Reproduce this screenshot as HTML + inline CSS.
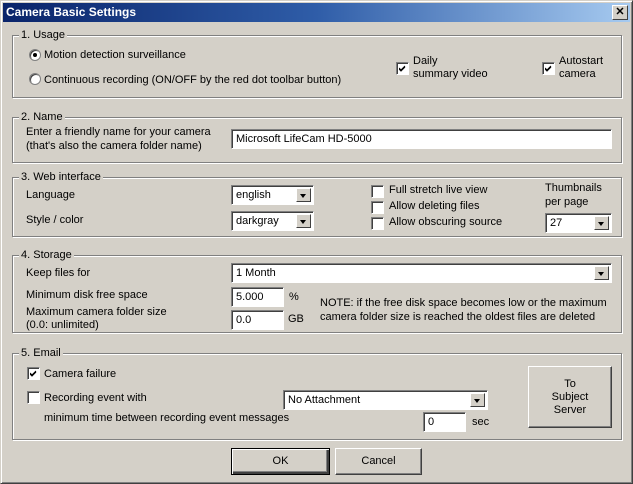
<!DOCTYPE html>
<html><head><style>
body{margin:0;width:633px;height:484px;background:#d4d0c8;font-family:"Liberation Sans",sans-serif;font-size:11px;color:#000;position:relative;overflow:hidden}
.a{position:absolute;white-space:nowrap}
.win{position:absolute;left:0;top:0;width:631px;height:482px;border:1px solid;border-color:#d4d0c8 #404040 #404040 #d4d0c8;box-shadow:inset 1px 1px #fff,inset -1px -1px #808080}
.title{position:absolute;left:3px;top:3px;width:627px;height:19px;background:linear-gradient(90deg,#0a246a,#2f5da8 50%,#a6caf0);color:#fff;font-weight:bold;font-size:12px;line-height:19px;text-indent:3px}
.close{position:absolute;left:612px;top:5px;width:14px;height:13px;background:#d4d0c8;border:1px solid;border-color:#fff #404040 #404040 #fff;font-weight:bold;font-size:11px;line-height:12px;text-align:center;color:#000}
.grp{position:absolute;border:1px solid #808080;box-shadow:1px 1px #fff,inset 1px 1px #fff}
.lg{position:absolute;background:#d4d0c8;padding:0 2px;top:-8px;left:6px;line-height:14px}
.in{position:absolute;background:#fff;border:1px solid;border-color:#808080 #fff #fff #808080;box-shadow:inset 1px 1px #404040;box-sizing:border-box;padding-left:4px;line-height:19px}
.dd{position:absolute;right:2px;top:2px;width:15px;height:14px;background:#d4d0c8;box-sizing:border-box;border:1px solid;border-color:#fff #404040 #404040 #fff}
.dd:after{content:"";position:absolute;left:3px;top:5px;border:3.5px solid transparent;border-top:4px solid #000;border-bottom:0}
.cb{position:absolute;width:13px;height:13px;background:#fff;box-sizing:border-box;border:1px solid;border-color:#808080 #fff #fff #808080;box-shadow:inset 1px 1px #404040}
.cb svg{position:absolute;left:2px;top:2px}
.rb{position:absolute;width:12px;height:12px;border-radius:50%;background:#fff;box-sizing:border-box;border:1px solid #808080;box-shadow:inset 1px 1px #404040}
.btn{position:absolute;background:#d4d0c8;box-sizing:border-box;border:1px solid;border-color:#fff #404040 #404040 #fff;box-shadow:inset -1px -1px #808080;text-align:center}
</style></head><body>
<div class="win"></div>
<div class="title">Camera Basic Settings</div>
<div class="close">✕</div>

<div class="grp" style="left:12px;top:35px;width:608px;height:61px"><span class="lg">1. Usage</span></div>
<div class="rb" style="left:29px;top:49px"><div style="position:absolute;left:3px;top:3px;width:4px;height:4px;border-radius:50%;background:#000"></div></div>
<div class="a" style="left:44px;top:49px">Motion detection surveillance</div>
<div class="rb" style="left:29px;top:73px"></div>
<div class="a" style="left:44px;top:74px">Continuous recording (ON/OFF by the red dot toolbar button)</div>
<div class="cb" style="left:396px;top:62px"><svg width="7" height="7"><path d="M0 3 L2 5 L6 1 M0 4 L2 6 L6 2" stroke="#000" fill="none"/></svg></div>
<div class="a" style="left:413px;top:55px;line-height:13px">Daily<br>summary video</div>
<div class="cb" style="left:542px;top:62px"><svg width="7" height="7"><path d="M0 3 L2 5 L6 1 M0 4 L2 6 L6 2" stroke="#000" fill="none"/></svg></div>
<div class="a" style="left:559px;top:55px;line-height:13px">Autostart<br>camera</div>

<div class="grp" style="left:12px;top:117px;width:608px;height:44px"><span class="lg">2. Name</span></div>
<div class="a" style="left:26px;top:125px;line-height:14px">Enter a friendly name for your camera<br>(that's also the camera folder name)</div>
<div class="in" style="left:231px;top:129px;width:381px;height:20px">Microsoft LifeCam HD-5000</div>

<div class="grp" style="left:12px;top:177px;width:608px;height:58px"><span class="lg">3. Web interface</span></div>
<div class="a" style="left:26px;top:189px">Language</div>
<div class="a" style="left:26px;top:214px">Style / color</div>
<div class="in" style="left:231px;top:185px;width:83px;height:20px">english<div class="dd"></div></div>
<div class="in" style="left:231px;top:211px;width:83px;height:20px">darkgray<div class="dd"></div></div>
<div class="cb" style="left:371px;top:185px"></div><div class="a" style="left:389px;top:184px">Full stretch live view</div>
<div class="cb" style="left:371px;top:201px"></div><div class="a" style="left:389px;top:200px">Allow deleting files</div>
<div class="cb" style="left:371px;top:217px"></div><div class="a" style="left:389px;top:216px">Allow obscuring source</div>
<div class="a" style="left:545px;top:181px;line-height:14px">Thumbnails<br>per page</div>
<div class="in" style="left:545px;top:213px;width:67px;height:20px">27<div class="dd"></div></div>

<div class="grp" style="left:12px;top:255px;width:608px;height:76px"><span class="lg">4. Storage</span></div>
<div class="a" style="left:26px;top:267px">Keep files for</div>
<div class="in" style="left:231px;top:263px;width:381px;height:20px">1 Month<div class="dd"></div></div>
<div class="a" style="left:26px;top:289px">Minimum disk free space</div>
<div class="in" style="left:231px;top:287px;width:53px;height:20px">5.000</div>
<div class="a" style="left:289px;top:291px">%</div>
<div class="a" style="left:26px;top:306px;line-height:13px">Maximum camera folder size<br>(0.0: unlimited)</div>
<div class="in" style="left:231px;top:310px;width:53px;height:20px">0.0</div>
<div class="a" style="left:288px;top:313px">GB</div>
<div class="a" style="left:320px;top:296px;line-height:14px">NOTE: if the free disk space becomes low or the maximum<br>camera folder size is reached the oldest files are deleted</div>

<div class="grp" style="left:12px;top:353px;width:608px;height:85px"><span class="lg">5. Email</span></div>
<div class="cb" style="left:27px;top:367px"><svg width="7" height="7"><path d="M0 3 L2 5 L6 1 M0 4 L2 6 L6 2" stroke="#000" fill="none"/></svg></div><div class="a" style="left:44px;top:368px">Camera failure</div>
<div class="cb" style="left:27px;top:391px"></div><div class="a" style="left:44px;top:392px">Recording event with</div>
<div class="a" style="left:44px;top:412px">minimum time between recording event messages</div>
<div class="in" style="left:283px;top:390px;width:205px;height:20px">No Attachment<div class="dd"></div></div>
<div class="in" style="left:423px;top:412px;width:43px;height:20px">0</div>
<div class="a" style="left:472px;top:416px">sec</div>
<div class="btn" style="left:528px;top:366px;width:84px;height:62px;padding-top:11px;line-height:13px">To<br>Subject<br>Server</div>

<div class="btn" style="left:231px;top:448px;width:99px;height:27px;line-height:24px;border-color:#000;box-shadow:inset 1px 1px #fff,inset -2px -2px #404040,inset -3px -3px #808080">OK</div>
<div class="btn" style="left:335px;top:448px;width:87px;height:27px;line-height:24px">Cancel</div>
</body></html>
